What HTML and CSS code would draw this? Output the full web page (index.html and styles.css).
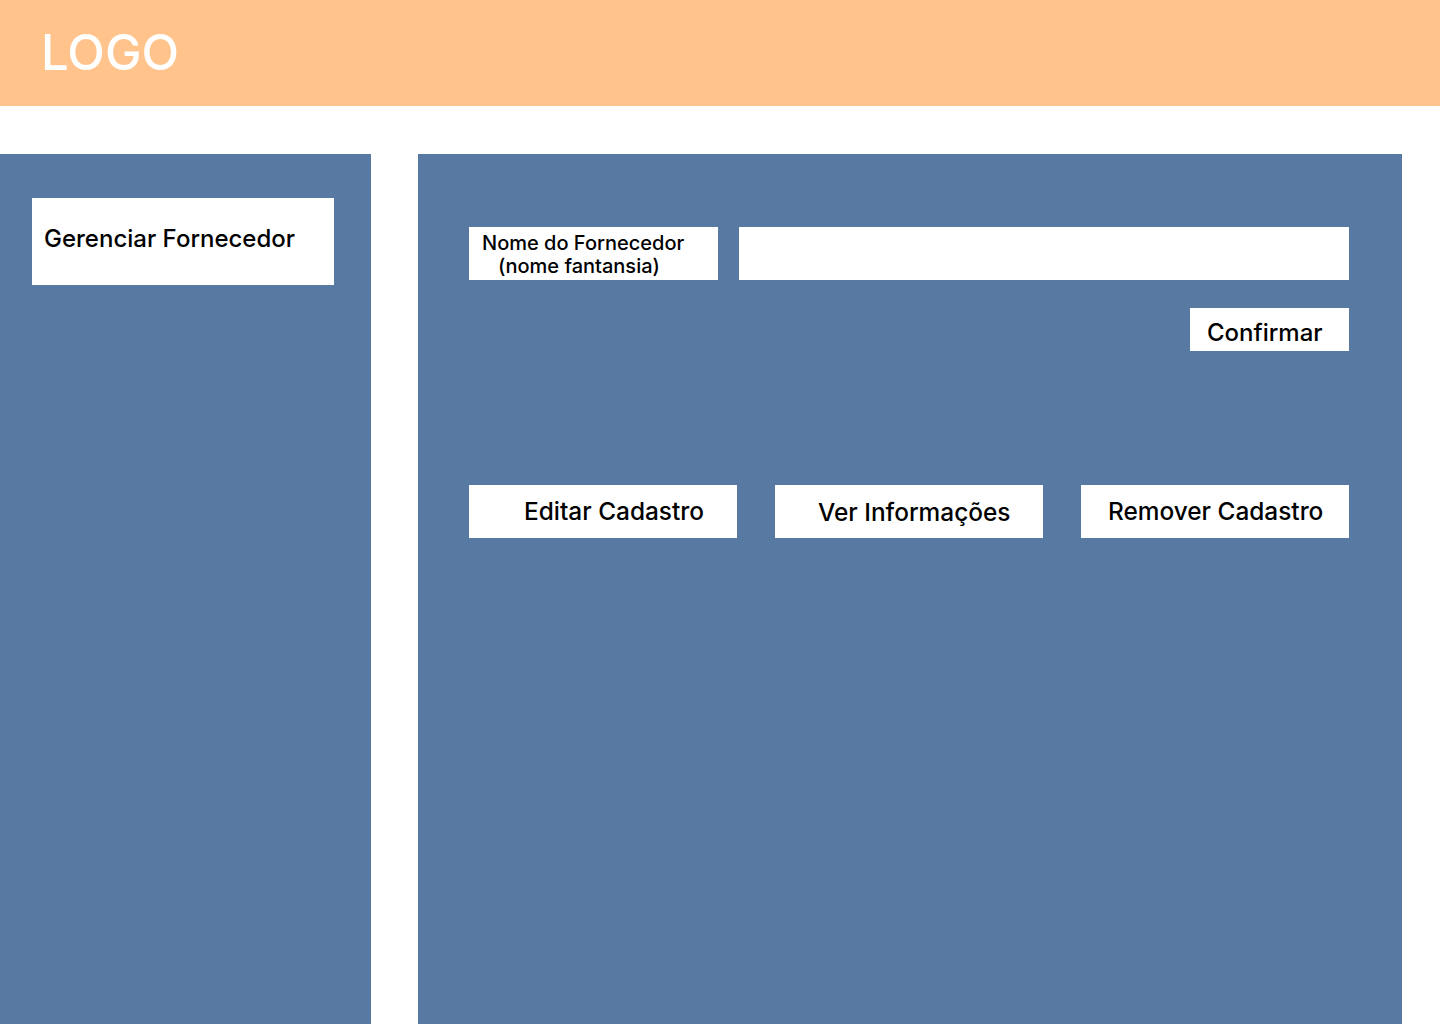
FILE: index.html
```html
<!DOCTYPE html>
<html lang="pt">
<head>
<meta charset="utf-8">
<title>Gerenciar Fornecedor</title>
<link rel="stylesheet" href="styles.css">
</head>
<body>
<header class="topbar">
  <div class="logo">LOGO</div>
</header>
<div class="layout">
  <aside class="sidebar">
    <div class="nav-item">Gerenciar Fornecedor</div>
  </aside>
  <main class="content">
    <div class="field-row">
      <div class="field-label">
        <span class="l1">Nome do Fornecedor</span>
        <span class="l2">(nome fantansia)</span>
      </div>
      <div class="field-input"></div>
    </div>
    <div class="confirm-row">
      <div class="btn-confirm">Confirmar</div>
    </div>
    <div class="actions">
      <div class="action action-edit">Editar Cadastro</div>
      <div class="action action-view">Ver Informações</div>
      <div class="action action-remove">Remover Cadastro</div>
    </div>
  </main>
</div>
</body>
</html>
```
FILE: styles.css
```css
* { box-sizing: border-box; }
html, body { margin: 0; padding: 0; }
body {
  width: 1440px;
  height: 1024px;
  overflow: hidden;
  background: #ffffff;
  font-family: Inter, "Noto Sans", sans-serif;
  color: #000;
}
.topbar {
  height: 106px;
  background: #FFC38B;
  display: flex;
  align-items: center;
  padding-left: 41px;
}
.logo {
  color: #ffffff;
  font-size: 49px;
  font-weight: 500;
  line-height: 1;
  margin-top: -2px;
}
.layout {
  display: flex;
  gap: 47px;
  margin-top: 48px;
  height: 870px;
}
.sidebar {
  width: 371px;
  background: #5879A2;
  padding: 44px 0 0 32px;
}
.nav-item {
  width: 302px;
  height: 87px;
  background: #fff;
  font-size: 24px;
  font-weight: 500;
  padding: 27px 0 0 12px;
  line-height: 28px;
  white-space: nowrap;
}
.content {
  width: 984px;
  background: #5879A2;
  padding: 73px 53px 0 51px;
}
.field-row {
  display: flex;
  gap: 21px;
  height: 53px;
}
.field-label {
  width: 249px;
  background: #fff;
  font-size: 20px;
  font-weight: 500;
  line-height: 23px;
  padding: 5px 0 0 13px;
  display: flex;
  flex-direction: column;
  white-space: nowrap;
}
.field-label .l2 { padding-left: 16px; }
.field-input {
  flex: 1;
  background: #fff;
}
.confirm-row {
  display: flex;
  justify-content: flex-end;
  margin-top: 28px;
}
.btn-confirm {
  width: 159px;
  height: 43px;
  background: #fff;
  font-size: 24px;
  font-weight: 500;
  line-height: 28px;
  padding: 11px 0 0 17px;
  white-space: nowrap;
}
.actions {
  display: flex;
  gap: 38px;
  margin-top: 134px;
}
.action {
  width: 268px;
  height: 53px;
  background: #fff;
  font-size: 24.4px;
  font-weight: 500;
  line-height: 28px;
  padding-top: 12px;
  white-space: nowrap;
}
.action-edit { padding-left: 55px; }
.action-view { padding-left: 43px; padding-top: 13px; }
.action-remove { padding-left: 27px; }
```
